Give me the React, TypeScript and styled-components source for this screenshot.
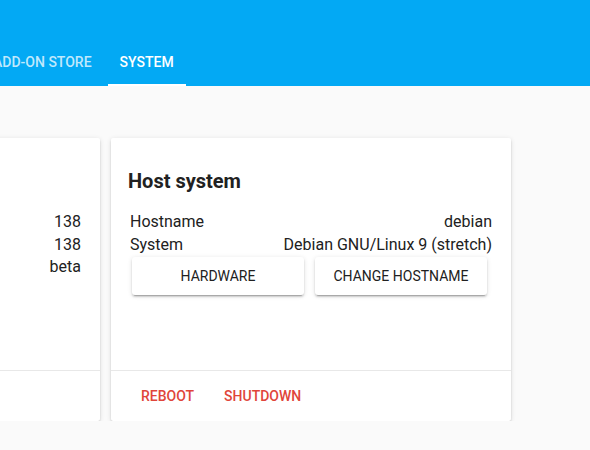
import React from "react";
import styled, { createGlobalStyle } from "styled-components";

const Global = createGlobalStyle`
  html, body { margin: 0; padding: 0; background: #fafafa; overflow: hidden; }
  body { font-family: Roboto, "Noto Sans", sans-serif; color: #212121; -webkit-font-smoothing: antialiased; }
`;

const Header = styled.header`
  background: #03a9f4;
  height: 86px;
  display: flex;
  flex-direction: column;
  justify-content: flex-end;
`;

const Tabs = styled.nav`
  display: flex;
  height: 48px;
  margin-left: -19px;
  gap: 4px;
`;

const Tab = styled.div<{ $active?: boolean }>`
  position: relative;
  display: flex;
  align-items: center;
  padding: 0 12px;
  font-size: 14px;
  font-weight: 500;
  text-transform: uppercase;
  color: ${(p) => (p.$active ? "#ffffff" : "rgba(255,255,255,0.75)")};
  white-space: nowrap;
  &::after {
    content: "";
    position: absolute;
    left: 0;
    right: 0;
    bottom: 0;
    height: 2px;
    background: ${(p) => (p.$active ? "#ffffff" : "transparent")};
  }
`;

const Main = styled.main`
  padding-top: 52px;
`;

const Cards = styled.div`
  display: flex;
  gap: 11px;
  margin-left: -300px;
`;

const Card = styled.section`
  width: 400px;
  flex: 0 0 400px;
  background: #fff;
  border-radius: 2px;
  display: flex;
  flex-direction: column;
  box-shadow: 0 2px 2px 0 rgba(0, 0, 0, 0.14), 0 1px 5px 0 rgba(0, 0, 0, 0.12),
    0 3px 1px -2px rgba(0, 0, 0, 0.2);
`;

const CardContent = styled.div`
  min-height: 232px;
  box-sizing: border-box;
  padding: 24px 16px 0;
`;

const Title = styled.h2`
  margin: 0 0 11px;
  padding-left: 1px;
  font-size: 20px;
  line-height: 38px;
  font-weight: 700;
  color: #212121;
`;

const Info = styled.div`
  padding: 0 3px;
  font-size: 16px;
  line-height: 22.5px;
  color: #212121;
`;

const InfoRow = styled.div`
  display: flex;
  justify-content: space-between;
  white-space: nowrap;
`;

const ButtonRow = styled.div`
  display: flex;
  gap: 11px;
  padding: 0 5px;
  margin-top: 1px;
`;

const RaisedButton = styled.button`
  flex: 0 0 172px;
  height: 38px;
  border: none;
  border-radius: 3px;
  background: #fff;
  font-family: Roboto, sans-serif;
  font-size: 14px;
  font-weight: 400;
  text-transform: uppercase;
  letter-spacing: 0;
  color: #212121;
  box-shadow: 0 2px 2px 0 rgba(0, 0, 0, 0.14), 0 1px 5px 0 rgba(0, 0, 0, 0.12),
    0 3px 1px -2px rgba(0, 0, 0, 0.2);
`;

const CardActions = styled.div`
  border-top: 1px solid #e8e8e8;
  height: 51px;
  box-sizing: border-box;
  display: flex;
  align-items: center;
  gap: 14px;
  padding-left: 22px;
`;

const ActionButton = styled.button<{ $warning?: boolean }>`
  border: none;
  background: transparent;
  padding: 0 8px;
  height: 36px;
  font-family: Roboto, sans-serif;
  font-size: 14px;
  font-weight: 500;
  text-transform: uppercase;
  color: ${(p) => (p.$warning ? "#e0453a" : "#03a9f4")};
`;

export default function App() {
  return (
    <>
      <Global />
      <Header>
        <Tabs>
          <Tab>Add-on store</Tab>
          <Tab $active>System</Tab>
        </Tabs>
      </Header>
      <Main>
        <Cards>
          <Card>
            <CardContent>
              <Title>Information</Title>
              <Info>
                <InfoRow>
                  <span>Home Assistant</span>
                  <span>138</span>
                </InfoRow>
                <InfoRow>
                  <span>Hass.io supervisor</span>
                  <span>138</span>
                </InfoRow>
                <InfoRow>
                  <span>Channel</span>
                  <span>beta</span>
                </InfoRow>
              </Info>
            </CardContent>
            <CardActions>
              <ActionButton>Leave beta</ActionButton>
            </CardActions>
          </Card>
          <Card>
            <CardContent>
              <Title>Host system</Title>
              <Info>
                <InfoRow>
                  <span>Hostname</span>
                  <span>debian</span>
                </InfoRow>
                <InfoRow>
                  <span>System</span>
                  <span>Debian GNU/Linux 9 (stretch)</span>
                </InfoRow>
              </Info>
              <ButtonRow>
                <RaisedButton>Hardware</RaisedButton>
                <RaisedButton>Change hostname</RaisedButton>
              </ButtonRow>
            </CardContent>
            <CardActions>
              <ActionButton $warning>Reboot</ActionButton>
              <ActionButton $warning>Shutdown</ActionButton>
            </CardActions>
          </Card>
        </Cards>
      </Main>
    </>
  );
}
